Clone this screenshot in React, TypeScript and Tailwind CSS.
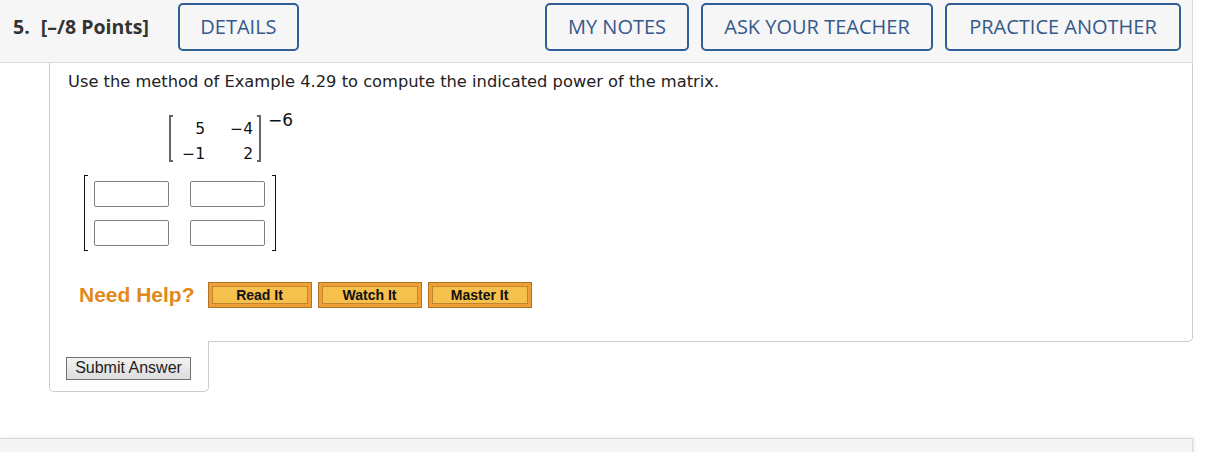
import React from 'react'

const headBtn =
  "h-[48px] rounded-[5px] border-2 border-[#2f5f96] bg-[#f6f6f6] text-[20px] text-[#35598a] flex items-center justify-center uppercase"

function HelpButton({ label }: { label: string }) {
  return (
    <div className="w-[104px] h-[26px] border border-[#b07426] bg-[#ee9f35] p-[3px]">
      <div className="h-full border border-[#c4842e] bg-[#f5c04b] flex items-center justify-center text-[14px] font-bold text-[#111] leading-none">
        {label}
      </div>
    </div>
  )
}

function Bracket({ side, h }: { side: 'l' | 'r'; h: string }) {
  return (
    <div
      className={`${h} w-[4px] border-y border-[#111] ${side === 'l' ? 'border-l' : 'border-r'}`}
    />
  )
}

export default function App() {
  const mathFont = { fontFamily: '"DejaVu Sans", Verdana, sans-serif' }
  return (
    <div
      className="w-[1205px] h-[452px] bg-white overflow-hidden"
      style={{ fontFamily: '"Open Sans", sans-serif' }}
    >
      {/* header */}
      <div className="w-[1193px] h-[63px] bg-[#f6f6f6] border-b border-r border-[#dcdcdc] flex items-start pt-[3px]">
        <div className="pl-[13px] h-[48px] flex items-center gap-[11px] text-[19.5px] font-bold text-[#333]">
          <span>5.</span>
          <span>[–/8 Points]</span>
        </div>
        <button className={`${headBtn} w-[121px] ml-[29px]`}>Details</button>
        <div className="ml-auto mr-[11px] flex gap-[12px]">
          <button className={`${headBtn} w-[144px]`}>My Notes</button>
          <button className={`${headBtn} w-[232px]`}>Ask Your Teacher</button>
          <button className={`${headBtn} w-[236px]`}>Practice Another</button>
        </div>
      </div>

      {/* question panel */}
      <div className="ml-[49px] w-[1144px] h-[279px] border-x border-b border-[#cccccc] rounded-br-[5px] pl-[18px] pt-[9px]">
        <p className="text-[16.3px] leading-[19px] text-[#222]" style={mathFont}>
          Use the method of Example 4.29 to compute the indicated power of the matrix.
        </p>

        {/* given matrix */}
        <div className="mt-[22px] ml-[101px] flex items-start text-[15.5px] text-[#111]" style={mathFont}>
          <div className="mt-[2px] flex items-stretch">
            <div className="h-[47px] w-[4px] border-y-2 border-l-2 border-[#666]" />
            <div className="grid grid-cols-[32px_48px] grid-rows-[24px_24px] h-[47px] pt-[2px] gap-y-[1px] items-center text-right pr-[4px] leading-[24px]">
              <span>5</span>
              <span>−4</span>
              <span>−1</span>
              <span>2</span>
            </div>
            <div className="h-[47px] w-[4px] border-y-2 border-r-2 border-[#666]" />
          </div>
          <span className="ml-[7px] text-[17px] leading-[16px] -mt-[1px]">−6</span>
        </div>

        {/* answer matrix */}
        <div className="mt-[13px] ml-[16px] flex items-center">
          <Bracket side="l" h="h-[76px]" />
          <div className="grid grid-cols-2 gap-x-[21px] gap-y-[13px] ml-[6px] mr-[7px]">
            <input className="w-[75px] h-[26px] border border-[#808080] rounded-[2px] bg-white" />
            <input className="w-[75px] h-[26px] border border-[#808080] rounded-[2px] bg-white" />
            <input className="w-[75px] h-[26px] border border-[#808080] rounded-[2px] bg-white" />
            <input className="w-[75px] h-[26px] border border-[#808080] rounded-[2px] bg-white" />
          </div>
          <Bracket side="r" h="h-[76px]" />
        </div>

        {/* need help */}
        <div className="mt-[28px] ml-[11px] flex items-center" style={{ fontFamily: '"Liberation Sans", Arial, sans-serif' }}>
          <span className="text-[21px] font-bold text-[#e2891c] mr-[13px]">Need Help?</span>
          <div className="flex gap-[6px]">
            <HelpButton label="Read It" />
            <HelpButton label="Watch It" />
            <HelpButton label="Master It" />
          </div>
        </div>
      </div>

      {/* submit tab */}
      <div className="-mt-px relative ml-[49px] w-[160px] h-[51px] bg-white border-x border-b border-[#cccccc] rounded-b-[5px] pl-[16px] pt-[14px]">
        <button
          className="w-[125px] h-[23px] border border-[#707070] bg-gradient-to-b from-[#f2f2f2] to-[#dddddd] text-[16px] text-[#222] leading-none"
          style={{ fontFamily: '"Liberation Sans", Arial, sans-serif' }}
        >
          Submit Answer
        </button>
      </div>

      {/* next question */}
      <div className="mt-[46px] w-[1193px] h-[40px] bg-[#f5f5f5] border-t border-r border-[#dadada] shadow-[1px_0_3px_rgba(0,0,0,0.12)]" />
    </div>
  )
}
